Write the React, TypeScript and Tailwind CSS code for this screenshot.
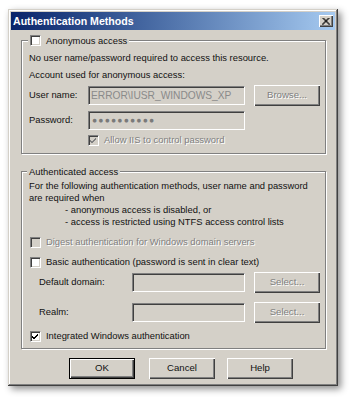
import React from "react";

const font = { fontFamily: '"Liberation Sans", Arial, sans-serif' };

function Check({ checked = false, disabled = false }: { checked?: boolean; disabled?: boolean }) {
  return (
    <div
      className={`relative w-[11px] h-[11px] shrink-0 border border-t-[#808080] border-l-[#808080] border-b-white border-r-white shadow-[inset_1px_1px_0_#404040,inset_-1px_-1px_0_#d4d0c8] ${
        disabled ? "bg-[#d4d0c8]" : "bg-white"
      }`}
    >
      {checked && (
        <svg className="absolute left-[1px] top-[1px]" width="7" height="7" viewBox="0 0 7 7">
          <path d="M0 3 L2 5 L6 1 M0 4 L2 6 L6 2" stroke={disabled ? "#808080" : "#000"} strokeWidth="1" fill="none" />
        </svg>
      )}
    </div>
  );
}

function Field({ w, children }: { w: string; children?: React.ReactNode }) {
  return (
    <div
      className={`${w} h-[19px] flex items-center px-[2px] bg-[#d4d0c8] border border-t-[#808080] border-l-[#808080] border-b-white border-r-white shadow-[inset_1px_1px_0_#404040,inset_-1px_-1px_0_#d4d0c8] text-[#8a8a8a] overflow-hidden whitespace-nowrap`}
    >
      {children}
    </div>
  );
}

function Btn({ label, disabled = false, def = false }: { label: string; disabled?: boolean; def?: boolean }) {
  return (
    <div
      className={`w-[66px] h-[21px] flex items-center justify-center bg-[#d4d0c8] text-[9.6px] ${
        def
          ? "border border-black shadow-[inset_1px_1px_0_#fff,inset_-1px_-1px_0_#404040,inset_-2px_-2px_0_#808080]"
          : "shadow-[inset_1px_1px_0_#fff,inset_-1px_-1px_0_#404040,inset_-2px_-2px_0_#808080]"
      } ${disabled ? "text-[#808080] [text-shadow:1px_1px_0_#fff]" : "text-[#111]"}`}
    >
      {label}
    </div>
  );
}

const dis = "text-[#808080] [text-shadow:1px_1px_0_#fff]";

export default function App() {
  return (
    <div className="w-[352px] h-[400px] bg-white pl-[8px] pt-[9px]" style={font}>
      <div className="w-[330px] h-[377px] bg-[#d4d0c8] p-[3px] flex flex-col shadow-[inset_-1px_-1px_0_#404040,inset_1px_1px_0_#d4d0c8,inset_-2px_-2px_0_#808080,inset_2px_2px_0_#fff,3px_3px_7px_rgba(0,0,0,0.45)]">
        {/* title bar */}
        <div className="h-[18px] flex items-center justify-between pl-[2px] pr-[2px] bg-gradient-to-r from-[#0a246a] to-[#a6caf0]">
          <span className="text-white font-bold text-[10.6px] leading-none">Authentication Methods</span>
          <div className="w-[14px] h-[12px] bg-[#d4d0c8] flex items-center justify-center shadow-[inset_1px_1px_0_#fff,inset_-1px_-1px_0_#404040,inset_-2px_-2px_0_#808080]">
            <svg width="8" height="7" viewBox="0 0 8 7">
              <path d="M0.5 0 L7.5 7 M7.5 0 L0.5 7 M1.5 0 L8 6.5 M6.5 0 L0 6.5" stroke="#000" strokeWidth="1" fill="none" opacity="0.9" />
            </svg>
          </div>
        </div>

        {/* group 1 */}
        <div className="relative ml-[10px] mt-[10px] w-[305px] h-[114px] border border-[#808080] shadow-[inset_1px_1px_0_#fff,1px_1px_0_#fff] pl-[7px] pr-[5px] text-[9.4px] text-[#111]">
          <div className="absolute left-[6px] top-[-7px] flex items-center gap-[5px] bg-[#d4d0c8] px-[2px] h-[13px]">
            <Check />
            <span className="leading-[13px]">Anonymous access</span>
          </div>
          <div className="mt-[10px] leading-[13px]">No user name/password required to access this resource.</div>
          <div className="mt-[4px] leading-[13px]">Account used for anonymous access:</div>
          <div className="mt-[4px] h-[21px] flex items-center">
            <span className="w-[59px]">User name:</span>
            <Field w="w-[157px]">
              <span className="text-[10.2px]">ERROR\IUSR_WINDOWS_XP</span>
            </Field>
            <div className="ml-[9px]">
              <Btn label="Browse..." disabled />
            </div>
          </div>
          <div className="mt-[4px] h-[21px] flex items-center">
            <span className="w-[59px]">Password:</span>
            <Field w="w-[157px]">
              <span className="text-[8.5px] tracking-[1.2px] pl-[1px] text-[#7a7a7a]">●●●●●●●●●●</span>
            </Field>
          </div>
          <div className="mt-[3px] ml-[59px] flex items-center gap-[5px] h-[13px]">
            <Check checked disabled />
            <span className={dis}>Allow IIS to control password</span>
          </div>
        </div>

        {/* group 2 */}
        <div className="relative ml-[10px] mt-[17px] w-[305px] h-[178px] border border-[#808080] shadow-[inset_1px_1px_0_#fff,1px_1px_0_#fff] pl-[7px] pr-[5px] text-[9.4px] text-[#111]">
          <div className="absolute left-[5px] top-[-7px] bg-[#d4d0c8] px-[2px] leading-[13px]">Authenticated access</div>
          <div className="mt-[8px] leading-[12px]">
            <div>For the following authentication methods, user name and password</div>
            <div>are required when</div>
            <div className="pl-[36px]">- anonymous access is disabled, or</div>
            <div className="pl-[36px]">- access is restricted using NTFS access control lists</div>
          </div>
          <div className="mt-[8px] flex items-center gap-[5px] h-[13px] pl-[1px]">
            <Check disabled />
            <span className={dis}>Digest authentication for Windows domain servers</span>
          </div>
          <div className="mt-[7px] flex items-center gap-[5px] h-[13px] pl-[1px]">
            <Check />
            <span>Basic authentication (password is sent in clear text)</span>
          </div>
          <div className="mt-[3px] h-[21px] flex items-center pl-[10px]">
            <span className="w-[93px]">Default domain:</span>
            <Field w="w-[113px]" />
            <div className="ml-[9px]">
              <Btn label="Select..." disabled />
            </div>
          </div>
          <div className="mt-[9px] h-[21px] flex items-center pl-[10px]">
            <span className="w-[93px]">Realm:</span>
            <Field w="w-[113px]" />
            <div className="ml-[9px]">
              <Btn label="Select..." disabled />
            </div>
          </div>
          <div className="mt-[7px] flex items-center gap-[5px] h-[13px] pl-[1px]">
            <Check checked />
            <span>Integrated Windows authentication</span>
          </div>
        </div>

        {/* buttons */}
        <div className="mt-[9px] flex pl-[58px]">
          <Btn label="OK" def />
          <div className="ml-[14px]">
            <Btn label="Cancel" />
          </div>
          <div className="ml-[12px]">
            <Btn label="Help" />
          </div>
        </div>
      </div>
    </div>
  );
}
